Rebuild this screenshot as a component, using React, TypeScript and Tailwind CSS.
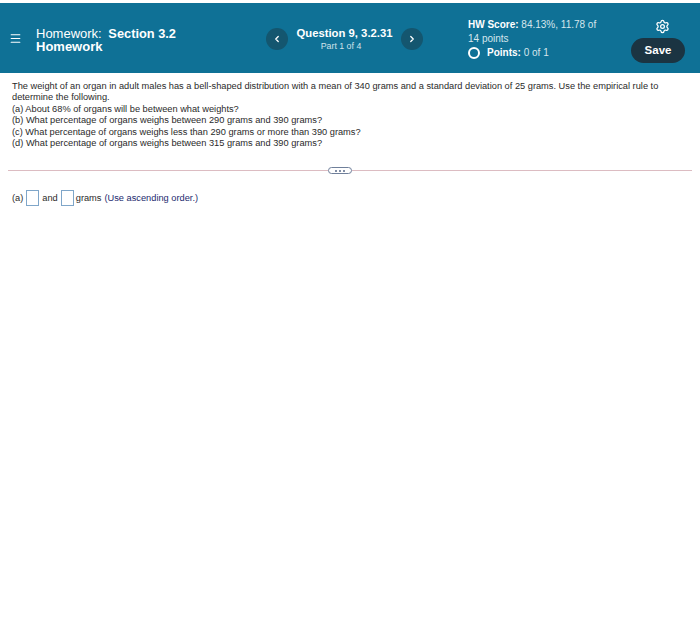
import { ChevronLeft, ChevronRight, Menu, Settings } from 'lucide-react';

export default function App() {
  return (
    <div className="h-[639px] w-full overflow-hidden bg-white pt-[3px] font-['Liberation_Sans',sans-serif]">
      {/* Top bar */}
      <header className="flex h-[70px] items-center bg-[#0f7196] text-white">
        <div className="flex w-[266px] items-center">
          <Menu className="ml-[9px] h-[13px] w-[13px]" strokeWidth={2} />
          <div className="mt-[3px] ml-[14px] text-[13px] leading-[13px]">
            <div>
              Homework: <span className="ml-[3px] text-[12.8px] font-bold">Section 3.2</span>
            </div>
            <div className="font-bold">Homework</div>
          </div>
        </div>

        {/* Question nav */}
        <div className="mt-[2px] flex w-[157px] items-center">
          <button className="flex h-[22px] w-[22px] items-center justify-center rounded-full bg-[#14566f]">
            <ChevronLeft className="h-[10px] w-[10px]" strokeWidth={3} />
          </button>
          <div className="-mt-[1px] w-[113px] text-center">
            <div className="text-[11.3px] leading-[14px] font-bold">Question 9, 3.2.31</div>
            <div className="pr-[7px] text-[8.8px] leading-[12px] text-[#cfe2ea]">Part 1 of 4</div>
          </div>
          <button className="flex h-[22px] w-[22px] items-center justify-center rounded-full bg-[#14566f]">
            <ChevronRight className="h-[10px] w-[10px]" strokeWidth={3} />
          </button>
        </div>

        {/* Score */}
        <div className="mt-[2px] ml-[45px] w-[163px] text-[10px] leading-[14px] text-[#d5e6ed]">
          <div className="w-[140px]">
            <span className="font-bold text-white">HW Score:</span> 84.13%, 11.78 of 14 points
          </div>
          <div className="flex items-center">
            <span className="h-[12px] w-[12px] rounded-full border-2 border-white" />
            <span className="ml-[7px]">
              <span className="font-bold text-white">Points:</span> 0 of 1
            </span>
          </div>
        </div>

        <div className="mt-[6px] flex flex-col items-center gap-[4px]">
          <Settings className="ml-[8px] h-[15px] w-[15px]" strokeWidth={2} />
          <button className="h-[25px] w-[54px] rounded-full bg-[#1b3442] text-[11.5px] font-bold">Save</button>
        </div>
      </header>

      {/* Question text */}
      <main className="px-[12px] pt-[8px] text-[9.25px] leading-[11.4px] text-[#2a2a2a]">
        <p className="w-[665px]">
          The weight of an organ in adult males has a bell-shaped distribution with a mean of 340 grams and a standard
          deviation of 25 grams. Use the empirical rule to determine the following.
        </p>
        <p>(a) About 68% of organs will be between what weights?</p>
        <p>(b) What percentage of organs weighs between 290 grams and 390 grams?</p>
        <p>(c) What percentage of organs weighs less than 290 grams or more than 390 grams?</p>
        <p>(d) What percentage of organs weighs between 315 grams and 390 grams?</p>
      </main>

      {/* Divider with expand pill */}
      <div className="mt-[18px] ml-[8px] flex w-[684px] items-center">
        <div className="h-px w-[320px] bg-[#dcbcc2]" />
        <div className="flex h-[7px] w-[24px] items-center justify-center gap-[2px] rounded-full border border-[#6f7f9a] bg-white">
          <span className="h-[2px] w-[2px] rounded-full bg-[#5a6a88]" />
          <span className="h-[2px] w-[2px] rounded-full bg-[#5a6a88]" />
          <span className="h-[2px] w-[2px] rounded-full bg-[#5a6a88]" />
        </div>
        <div className="h-px flex-1 bg-[#dcbcc2]" />
      </div>

      {/* Answer line */}
      <div className="mt-[16px] ml-[12px] flex items-center text-[9.25px] text-[#2a2a2a]">
        <span>(a)</span>
        <span className="ml-[3px] h-[16px] w-[13px] border border-[#7fa6c9] bg-white" />
        <span className="ml-[3px]">and</span>
        <span className="ml-[3px] h-[16px] w-[13px] border border-[#7fa6c9] bg-white" />
        <span className="ml-[2px]">grams</span>
        <span className="ml-[3px] text-[#1c2a6e]">(Use ascending order.)</span>
      </div>
    </div>
  );
}
